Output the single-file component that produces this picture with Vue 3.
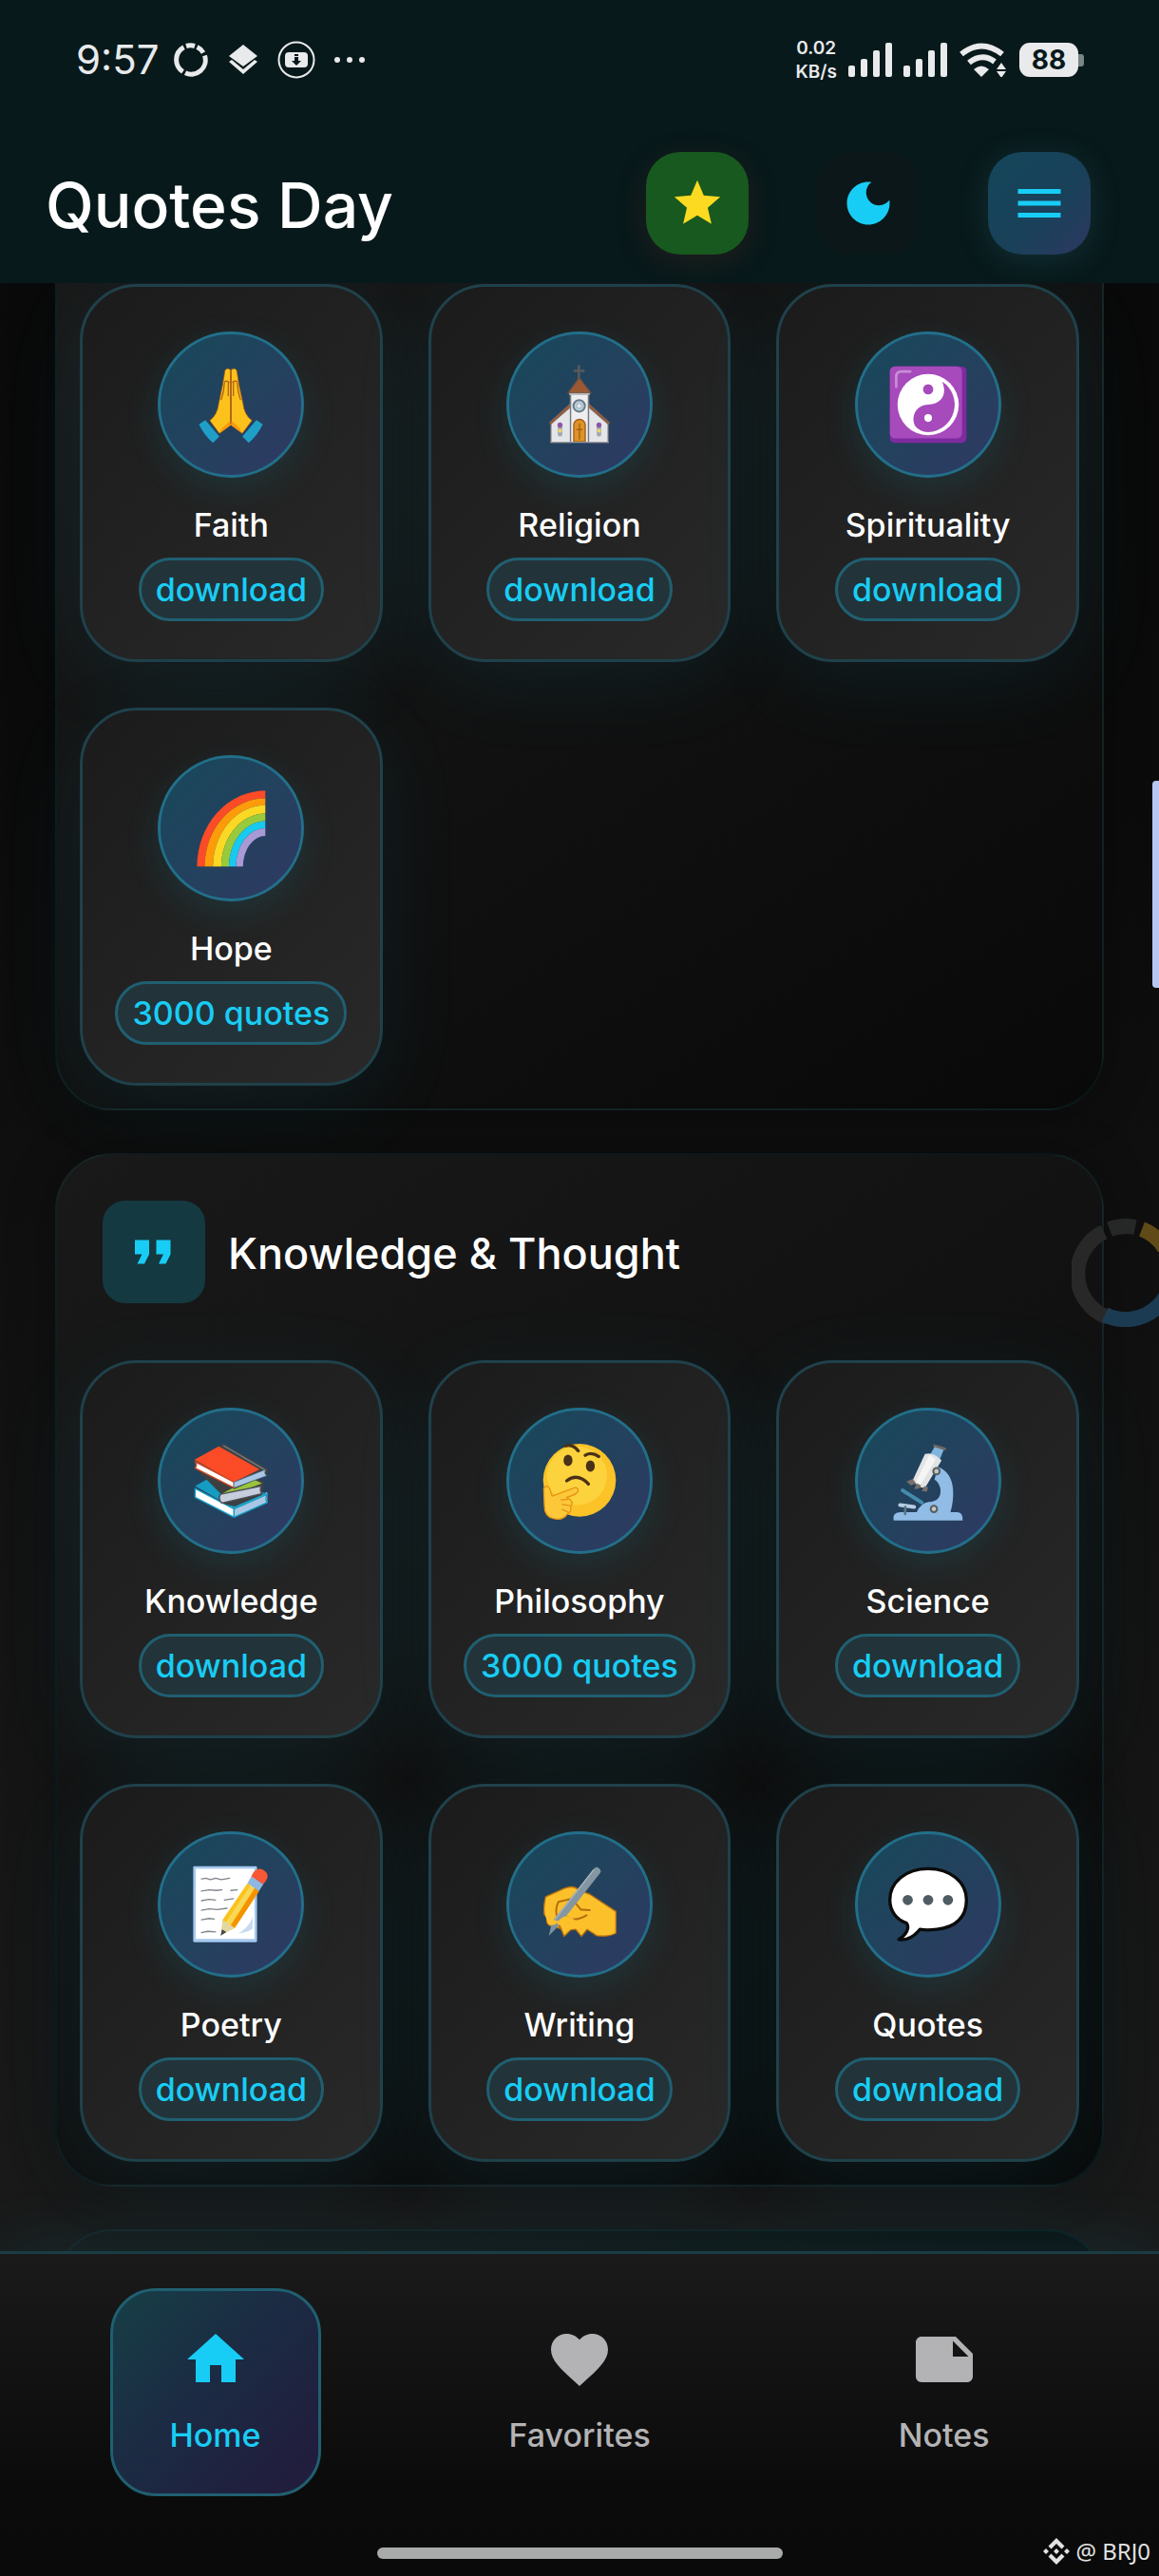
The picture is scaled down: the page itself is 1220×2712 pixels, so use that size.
<script setup>
import { h } from 'vue'

const faithCards = [
  { name: 'Faith', icon: 'pray', badge: 'download' },
  { name: 'Religion', icon: 'church', badge: 'download' },
  { name: 'Spirituality', icon: 'yinyang', badge: 'download' },
  { name: 'Hope', icon: 'rainbow', badge: '3000 quotes' },
]

const knowledgeCards = [
  { name: 'Knowledge', icon: 'books', badge: 'download' },
  { name: 'Philosophy', icon: 'thinking', badge: '3000 quotes' },
  { name: 'Science', icon: 'microscope', badge: 'download' },
  { name: 'Poetry', icon: 'memo', badge: 'download' },
  { name: 'Writing', icon: 'writing', badge: 'download' },
  { name: 'Quotes', icon: 'speech', badge: 'download' },
]

const groups = [
  { id: 'faith', title: '', cards: faithCards },
  { id: 'knowledge', title: 'Knowledge & Thought', cards: knowledgeCards },
]

const tabs = [
  { name: 'Home', active: true, path: 'M10 20v-6h4v6h5v-8h3L12 3 2 12h3v8z' },
  { name: 'Favorites', active: false, path: 'M12 21.35l-1.45-1.32C5.4 15.36 2 12.28 2 8.5 2 5.42 4.42 3 7.5 3c1.74 0 3.41.81 4.5 2.09C13.09 3.81 14.76 3 16.5 3 19.58 3 22 5.42 22 8.5c0 3.78-3.4 6.86-8.55 11.54L12 21.35z' },
  { name: 'Notes', active: false, path: 'M22 10l-6-6H4c-1.1 0-2 .9-2 2v12.01c0 1.1.9 1.99 2 1.99h16c1.1 0 2-.9 2-2v-8zm-7-4.5l5.500 5.500H15V5.500z' },
]

/* Pictograms are lists of [tag, attributes] drawn on a 128-unit square. */
const p = (d, fill, stroke, width) => ['path', { d, fill: fill || 'none', stroke, 'stroke-width': width, 'stroke-linecap': 'round', 'stroke-linejoin': 'round' }]
const c = (cx, cy, r, fill, stroke, width) => ['circle', { cx, cy, r, fill, stroke, 'stroke-width': width }]
const e = (cx, cy, rx, ry, fill) => ['ellipse', { cx, cy, rx, ry, fill }]
const r = (x, y, width, height, fill, rx) => ['rect', { x, y, width, height, fill, rx }]

const band = (rx, ry, nx, ny, fill) =>
  p(`M${118 - rx} 124A${rx} ${ry} 0 0 1 118 ${124 - ry}V${124 - ny}A${nx} ${ny} 0 0 0 ${118 - nx} 124z`, fill)

const art = {
  pray: [
    p('M24 88L46 114 36 124Q22 112 14 95z', '#1f9fc8'),
    p('M104 88L82 114 92 124Q106 112 114 95z', '#1f9fc8'),
    p('M55 10Q59 5 63.500 10V96L46 109 31 89Q43 80 45 62L51 34z', '#fcc21b', '#a8570f', 1),
    p('M73 10Q69 5 64.500 10V96L82 109 97 89Q85 80 83 62L77 34z', '#fcc21b', '#a8570f', 1),
    p('M46 109L64 96 82 109 78 101 66 90H62L50 101z', '#fb9a0c'),
    p('M64 9V94M54 30Q53 45 49 56M74 30Q75 45 79 56M54 28Q58 26 61 29M74 28Q70 26 67 29M60 30V50M68 30V50', null, '#b2661a', 2),
  ],
  church: [
    r(61, 2, 4, 22, '#57595a'),
    r(55, 9, 17, 4, '#57595a'),
    p('M19 123V91L50 63V123zM109 123V91L78 63V123z', '#e4e5e8', '#68696c', 2),
    p('M17 92L50 62V68L19 95zM111 92L78 62V68L109 95z', '#9a5a38', '#68696c', 1),
    r(49, 44, 30, 79, '#eeeef0'),
    p('M50 48V122M78 48V122', null, '#77797c', 2),
    p('M63.500 22L82 46H46z', '#9b5933', '#6a5147', 2),
    r(48, 46, 32, 3, '#b7b9bc'),
    c(63.5, 66, 9, '#b9d2e2', '#6b7a86', 3),
    c(63.5, 66, 4, '#e2e8ec', '#8497a5', 1),
    p('M55 122V96A9 9 0 0 1 73 96V122z', '#dd9327', '#a25f17', 2),
    p('M64 94V118M60 103H68', null, '#a25f17', 2),
    r(30, 94, 7, 20, '#9fa8b0', 3),
    r(91, 94, 7, 20, '#9fa8b0', 3),
    c(33.5, 96, 4, '#8e56a5'),
    c(94.5, 96, 4, '#8e56a5'),
    c(33.5, 105, 3, '#ecd668'),
    c(94.5, 105, 3, '#ecd668'),
    p('M19 123H109', null, '#9c9da1', 2),
  ],
  yinyang: [
    r(4, 4, 120, 120, '#7f2ba0', 8),
    r(4, 4, 113, 113, '#a74abb', 8),
    p('M14 36V20Q14 12 22 12H36', null, '#c78fd4', 4),
    c(64, 64, 48, '#fff'),
    p('M86 28C96 52 80 64 64 64C42 65 37 86 44 98Q51 107 64 107A43 43 0 0 0 86 28z', '#a74abb'),
    c(64, 40, 8, '#a74abb'),
    c(64, 85, 6, '#fff'),
  ],
  rainbow: [
    band(107, 119, 95, 107, '#fb4b27'),
    band(95, 107, 82, 96, '#fd9b0a'),
    band(82, 96, 69, 83, '#fbd824'),
    band(69, 83, 57, 71, '#98ca3c'),
    band(57, 71, 46, 60, '#18c9f0'),
    band(46, 60, 35, 48, '#a99ad6'),
  ],
  books: [
    p('M8 76L62 104 121 82V98L68 121 8 90z', '#b7d2ea'),
    p('M8 72L30 60 121 84 69 107z', '#159cc2'),
    p('M8 76L69 108V121L8 90z', '#fff', '#159cc2', 2),
    p('M69 108L121 85Q117 92 121 98L69 121z', '#a9c7e5', '#159cc2', 2),
    p('M12 48L48 84Q42 92 49 99L70 104 113 86 116 66 74 44z', '#3c4043'),
    p('M50 84L96 60 113 68 70 84z', '#98c43b'),
    p('M48 85L112 72Q108 79 113 84L50 99Q43 92 48 85z', '#c6cddd', '#4c5054', 2),
    p('M7 31L52 6 120 44Q124 47 121 55L69 77 8 44z', '#3f4245'),
    p('M7 31L45 10 109 46 69 66z', '#fb4b27'),
    p('M53 9L116 46', null, '#777b7e', 2),
    p('M8 34L69 66V75L8 44Q12 39 8 34z', '#fff', '#d04723', 2),
    p('M69 66L119 46Q115 52 120 56L69 75z', '#a9c7e5', '#51616f', 1),
  ],
  thinking: [
    c(64, 63, 57, '#fbc328'),
    e(60, 56, 47, 46, '#fdd33d'),
    e(46, 32, 7, 9, '#493118'),
    e(81, 41, 7, 9, '#493118'),
    p('M42 9Q54 6 62 17M73 24Q83 18 94 26', null, '#493118', 5),
    p('M44 64Q61 51 78 69', null, '#493118', 5),
    p('M8 76Q14 68 18 78L21 88 53 76Q62 72 62 80Q61 85 44 90L50 94Q55 99 50 104Q52 113 45 116Q38 127 23 123Q9 120 9 103z', '#fcc83a', '#e69416', 2),
    p('M35 94L45 93M37 101L49 103M37 109L46 113', null, '#e69416', 2),
  ],
  microscope: [
    p('M10 126Q7 114 20 113H46Q53 98 65 97Q86 96 83 75Q80 65 74 62L79 42Q101 50 103 78Q104 96 99 113H110Q119 114 118 126z', '#91bce5'),
    p('M24 79L54 98', null, '#448cae', 6),
    p('M20 102L42 105', null, '#b6cee3', 6),
    p('M28 105V116', null, '#597788', 4),
    p('M75 9L89 14 82 31 67 23z', '#82b5dd'),
    p('M74 9L90 14', null, '#716763', 4),
    p('M59 22Q72 18 85 32L59 75Q48 76 40 63z', '#e2e3e5'),
    p('M66 23L45 65 52 70 76 30z', '#f5f5f5'),
    p('M40 61L30 65 37 71 45 68M46 68L42 77 50 76 53 71M58 72L54 80 62 81 64 74', '#796f6b'),
    c(77, 49, 5, '#c7c7c3', '#555f61', 3),
    c(73, 108, 5, '#c7c7c3', '#555f61', 3),
  ],
  memo: [
    r(5, 4, 100, 119, '#a6c9ef', 2),
    r(9, 8, 92, 110, '#fff'),
    p('M18 24L25 23 32 25 40 23 49 25 62 23M18 43L30 41 42 42 50 41M64 42L74 41M18 58L30 56 40 57M54 57L68 55M18 73L30 71 43 72 58 70M18 88L30 86 38 87M18 108L28 106 40 107', null, '#80848a', 2),
    p('M76 109Q94 99 98 83V102Q88 109 76 109z', '#c6daf0'),
    p('M90 31L108 43 70 101 49 111 51 88z', '#fcc21b'),
    p('M95 34L101 38 63 96 56 92z', '#f7d958'),
    p('M102 38L108 43 70 101 64 97z', '#f49300'),
    p('M51 88L70 101 49 111z', '#e3d8a3'),
    p('M50 103L57 107 48 113z', '#494947'),
    p('M90 31L96 20 115 32 108 43z', '#90b7e0'),
    p('M96 20Q103 4 115 10 128 18 115 32z', '#f85836'),
  ],
  writing: [
    p('M11 52L40 39Q55 33 62 41L80 48 121 75V109Q111 115 91 113L76 103 67 114 58 103 50 104 40 114 35 102 25 99Q10 98 13 84L9 80Q7 67 11 52z', '#fcc12a', '#b56f11', 2),
    p('M29 84Q25 72 31 60L52 55 66 72 80 73M29 82L48 85M35 102Q26 91 40 84Q58 92 75 81', null, '#b56f11', 3),
    p('M91 12L27 93', null, '#8396a1', 12),
    p('M86 10L26 87', null, '#a4b5be', 2),
    p('M21 91L31 98 16 113z', '#7c929e'),
    p('M10 80Q20 75 24 88L31 90Q25 99 15 95', '#fcc12a'),
    p('M32 93Q42 81 52 89Q61 97 73 88', null, '#fcc12a', 6),
  ],
  speech: [
    p('M64 8C29 8 4 29 4 57C4 75 15 88 30 93C36 101 29 112 18 119C34 121 44 112 51 103C57 104 69 104 78 103C107 100 124 84 124 57C124 29 99 8 64 8z', '#fff', '#0b0b0b', 5),
    c(32, 57, 8, '#505c63'),
    c(64, 57, 8, '#505c63'),
    c(95, 57, 8, '#505c63'),
  ],
}

const Pictogram = (props) =>
  h('svg', { viewBox: '0 0 128 128', width: 86, height: 86, 'aria-hidden': 'true' },
    art[props.name].map(([tag, attrs]) => h(tag, attrs)))
Pictogram.props = ['name']
</script>

<template>
  <div class="app">
    <header class="top">
      <div class="status">
        <div class="status-side">
          <span class="clock">9:57</span>
          <svg class="s-ring" viewBox="0 0 36 36" width="36" height="36" fill="none" stroke="#e8eaeb" stroke-width="5">
            <path d="M13 3.500A15 15 0 0 1 22 3.500M24.500 4.500A15 15 0 0 1 31 10.500M32.500 13.500A15 15 0 0 1 12 31.800M9.500 30.500A15 15 0 0 1 10.500 4.700" />
          </svg>
          <svg class="s-layers" viewBox="0 0 30 32" width="30" height="32" fill="#e8eaeb">
            <path d="M15 0L30 12 15 23 0 12z" /><path d="M0 18L3 16 15 26 27 16 30 18 15 31z" />
          </svg>
          <svg class="s-save" viewBox="0 0 40 40" width="40" height="40">
            <circle cx="20" cy="20" r="18.500" fill="none" stroke="#e8eaeb" stroke-width="2" />
            <rect x="8" y="12" width="24" height="16" rx="4" fill="#e8eaeb" />
            <path d="M18 14h4v2h-4zM18 17h4v4h3l-5 5-5-5h3z" fill="#08191b" />
          </svg>
          <svg class="s-dots" viewBox="0 0 34 8" width="34" height="8" fill="#e8eaeb">
            <circle cx="4" cy="4" r="3" /><circle cx="17" cy="4" r="3" /><circle cx="30" cy="4" r="3" />
          </svg>
        </div>
        <div class="status-side right">
          <span class="speed">0.02<br />KB/s</span>
          <svg v-for="n in 2" :key="n" viewBox="0 0 46 36" width="46" height="36" fill="#e8eaeb">
            <rect y="24" width="7" height="12" rx="2" /><rect x="13" y="17" width="7" height="19" rx="2" />
            <rect x="26" y="8" width="7" height="28" rx="2" /><rect x="39" width="7" height="36" rx="2" />
          </svg>
          <svg viewBox="0 0 52 36" width="52" height="36">
            <path d="M3 12Q24-5 46 12M11 21Q25 10 38 20" fill="none" stroke="#e8eaeb" stroke-width="6" />
            <path d="M16 28Q24 21 32 28L24 36z" fill="#e8eaeb" />
            <path d="M45 21l5 7H40zM45 37l5-7H40z" fill="#e8eaeb" />
          </svg>
          <span class="battery"><b>88</b></span>
        </div>
      </div>
      <div class="toolbar">
        <h1>Quotes Day</h1>
        <button class="tool star" type="button" aria-label="Premium">
          <svg viewBox="0 0 24 24" width="58" height="58" fill="#fcda22"><path d="M12 17.270L18.180 21l-1.640-7.030L22 9.240l-7.190-.61L12 2 9.190 8.630 2 9.240l5.460 4.730L5.820 21z" /></svg>
        </button>
        <button class="tool moon" type="button" aria-label="Dark mode">
          <svg viewBox="0 0 24 24" width="60" height="60" fill="#18cdf5"><path d="M12 3c-4.970 0-9 4.030-9 9s4.030 9 9 9 9-4.030 9-9c0-.46-.04-.92-.1-1.360-.98 1.370-2.580 2.260-4.400 2.260-2.980 0-5.400-2.420-5.400-5.400 0-1.810.89-3.420 2.260-4.400C12.920 3.040 12.460 3 12 3z" /></svg>
        </button>
        <button class="tool menu" type="button" aria-label="Menu">
          <svg viewBox="0 0 24 24" width="60" height="60" fill="#18cdf5"><path d="M3 18h18v-2H3v2zm0-5h18v-2H3v2zm0-7v2h18V6H3z" /></svg>
        </button>
      </div>
    </header>

    <main class="content">
      <section v-for="group in groups" :key="group.id" class="group" :class="{ continued: !group.title }">
        <header v-if="group.title" class="group-head">
          <span class="group-icon">
            <svg viewBox="0 0 24 24" width="60" height="60" fill="#18cdf5"><path d="M5 17h3l2-4V7H4v6h3zm9 0h3l2-4V7h-6v6h3z" /></svg>
          </span>
          <h2>{{ group.title }}</h2>
        </header>
        <div class="grid">
          <article v-for="card in group.cards" :key="card.name" class="card">
            <span class="medallion"><Pictogram :name="card.icon" /></span>
            <h3>{{ card.name }}</h3>
            <button class="pill" type="button">{{ card.badge }}</button>
          </article>
        </div>
      </section>
      <section class="group next"></section>
    </main>

    <footer class="bottom">
      <nav class="tabs">
        <a v-for="tab in tabs" :key="tab.name" href="#" class="tab" :class="{ active: tab.active }">
          <svg viewBox="0 0 24 24" width="72" height="72" fill="currentColor"><path :d="tab.path" /></svg>
          <span>{{ tab.name }}</span>
        </a>
      </nav>
      <div class="handle"></div>
      <div class="credit">
        <svg viewBox="0 0 28 28" width="28" height="28" fill="#e2e2e2">
          <path d="M14 0l8.500 8.500-3 3L14 6l-5.500 5.500-3-3zM14 28l8.500-8.500-3-3L14 22l-5.500-5.500-3 3zM14 11l3 3-3 3-3-3zM3 11l3 3-3 3-3-3zM25 11l3 3-3 3-3-3z" />
        </svg>
        <span>@ BRJ0</span>
      </div>
    </footer>

    <div class="thumb"></div>
    <svg class="float-ring" viewBox="0 0 114 114" width="114" height="114" fill="none" stroke-width="16">
      <path d="M38 104A49 49 0 0 1 34 14" stroke="#282828" />
      <path d="M40 11A49 49 0 0 1 67 9" stroke="#262827" />
      <path d="M74 11A49 49 0 0 1 98 31" stroke="#604a18" />
      <path d="M101 36A49 49 0 0 1 35 101" stroke="#1b3b53" />
    </svg>
  </div>
</template>

<style>
body {
  margin: 0;
  background: #0b0b0b;
}
</style>

<style scoped>
.app {
  position: relative;
  display: flex;
  flex-direction: column;
  min-height: 100vh;
  overflow: hidden;
  box-sizing: border-box;
  font-family: Inter, "Liberation Sans", sans-serif;
  color: #fff;
  background: linear-gradient(180deg, #090909 0%, #0b0b0b 30%, #191919 85%, #191919 100%);
}
.app * { box-sizing: border-box; }
svg { display: block; flex: none; }
h1, h2, h3 { margin: 0; font-weight: 500; }
button { font: inherit; border: 0; padding: 0; cursor: pointer; }

.top {
  position: relative;
  z-index: 1;
  background: #08191b;
}
.status {
  display: flex;
  justify-content: space-between;
  align-items: center;
  height: 126px;
  padding: 0 78px 0 80px;
  color: #e8eaeb;
}
.status-side { display: flex; align-items: center; }
.status-side.right { gap: 12px; }
.clock { font-size: 42px; line-height: 48px; }
.s-ring { margin-left: 16px; }
.s-layers { margin-left: 22px; }
.s-save { margin-left: 21px; }
.s-dots { margin-left: 19px; }
.speed {
  font-size: 19px;
  line-height: 25px;
  font-weight: 600;
  text-align: center;
}
.battery {
  position: relative;
  width: 62px;
  height: 36px;
  margin-right: 7px;
  border-radius: 11px;
  background: #e8eaeb;
  color: #08191b;
  text-align: center;
}
.battery b { font-size: 28px; line-height: 37px; font-weight: 700; }
.battery::after {
  content: "";
  position: absolute;
  left: 62px;
  top: 12px;
  width: 6px;
  height: 13px;
  border-radius: 0 3px 3px 0;
  background: #7a8586;
}

.toolbar {
  display: flex;
  align-items: center;
  gap: 72px;
  padding: 34px 72px 30px 48px;
}
.toolbar h1 {
  flex: 1;
  padding-top: 4px;
  font-size: 66px;
  line-height: 84px;
}
.tool {
  display: grid;
  place-items: center;
  width: 108px;
  height: 108px;
  border-radius: 36px;
}
.star { background: #17591e; box-shadow: 0 8px 28px rgba(60, 36, 30, .45); }
.moon { background: #0b1719; }
.menu {
  background: linear-gradient(135deg, #14465a, #194159 55%, #2c3860);
  box-shadow: 0 6px 30px rgba(40, 100, 110, .3);
}

.content {
  flex: 1;
  display: flex;
  flex-direction: column;
  gap: 45px;
  padding: 0 58px;
}
.group {
  padding: 0 24px 24px;
  border: 2px solid rgba(24, 160, 190, .09);
  border-radius: 60px;
  background: linear-gradient(145deg, #191919, #090909);
  box-shadow: 0 0 50px rgba(0, 0, 0, .3);
}
.continued {
  padding-top: 1px;
  border-top: 0;
  border-top-left-radius: 0;
  border-top-right-radius: 0;
}
/* The following group slides under the tab bar. */
.next {
  height: 123px;
  margin-bottom: -100px;
  padding: 0;
  background: linear-gradient(90deg, #171a1a, #0c1314);
  box-shadow: none;
}
.group-head {
  display: flex;
  align-items: center;
  gap: 24px;
  padding: 48px 24px 60px;
}
.group-icon {
  display: grid;
  place-items: center;
  width: 108px;
  height: 108px;
  border-radius: 24px;
  background: #153941;
}
.group-head h2 {
  padding-top: 4px;
  font-size: 45px;
  line-height: 56px;
}

.grid {
  display: grid;
  grid-template-columns: repeat(3, 1fr);
  gap: 48px;
}
.card {
  display: flex;
  flex-direction: column;
  align-items: center;
  padding: 47px 0 40px;
  border: 3px solid #1f414b;
  border-radius: 60px;
  background: linear-gradient(135deg, #1b1b1b, #292929);
  box-shadow: 0 20px 90px rgba(24, 205, 245, .08);
}
.medallion {
  display: grid;
  place-items: center;
  width: 154px;
  height: 154px;
  border: 3px solid #226f8a;
  border-radius: 50%;
  background: linear-gradient(135deg, #17485a, #24415e 55%, #303863);
  box-shadow: 0 12px 36px rgba(24, 160, 190, .14);
}
.card h3 {
  margin: 28px 0 12px;
  font-size: 34px;
  line-height: 44px;
}
.pill {
  height: 67px;
  padding: 0 15px;
  border: 3px solid #205f71;
  border-radius: 34px;
  background: #223439;
  color: #18cdf5;
  font-size: 34px;
  line-height: 44px;
  font-weight: 500;
}

.bottom {
  position: relative;
  display: flex;
  flex-direction: column;
  align-items: center;
  gap: 54px;
  padding: 36px 0 18px;
  border-top: 3px solid #1c3c44;
  background: linear-gradient(180deg, #191a19, #0b0b0b 72%, #0a0a0a);
  box-shadow: 0 -12px 60px rgba(24, 205, 245, .08);
}
.tabs {
  display: flex;
  justify-content: space-around;
  align-self: stretch;
  padding: 0 48px;
}
.tab {
  display: flex;
  flex-direction: column;
  align-items: center;
  gap: 22px;
  padding: 36px 60px 39px;
  border: 3px solid transparent;
  border-radius: 48px;
  color: #b3b3b5;
  font-size: 34px;
  line-height: 44px;
  font-weight: 500;
  text-decoration: none;
}
.tab.active {
  border-color: #205f71;
  background: linear-gradient(135deg, #163f46, #1b2c43 42%, #211d3d 90%);
  color: #18cdf5;
}
.handle {
  width: 35%;
  height: 12px;
  border-radius: 6px;
  background: #a9abaa;
}
.credit {
  position: absolute;
  right: 9px;
  bottom: 10px;
  display: flex;
  align-items: center;
  gap: 6px;
  font-family: "Noto Sans", sans-serif;
  font-size: 24px;
  line-height: 32px;
  color: #e2e2e2;
}

.thumb {
  position: absolute;
  right: 0;
  top: 822px;
  width: 7px;
  height: 218px;
  border-radius: 4px 0 0 4px;
  background: #b7c6f2;
}
.float-ring {
  position: absolute;
  right: -22px;
  top: 1283px;
}
</style>
